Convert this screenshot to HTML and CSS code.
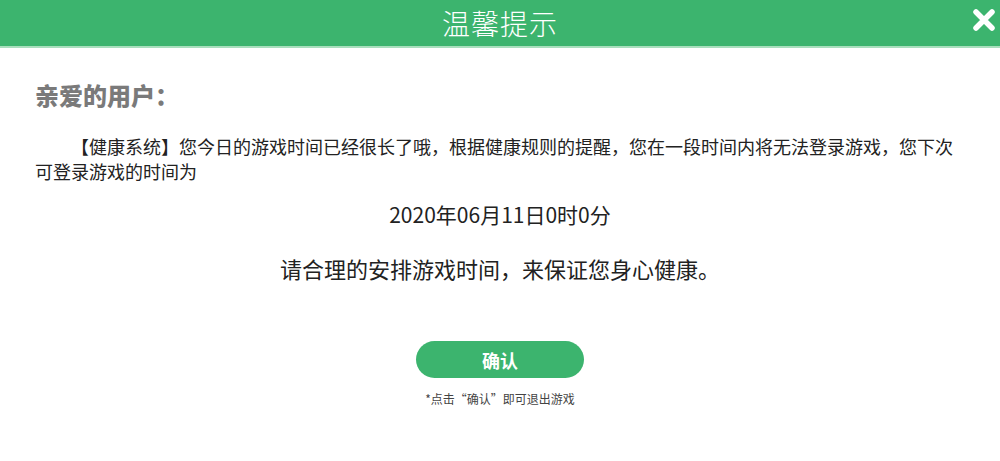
FILE: index.html
```html
<!DOCTYPE html>
<html lang="zh-CN">
<head>
    <meta charset="UTF-8">
    <meta name="viewport" content="width=device-width, initial-scale=1.0">
    <title>温馨提示</title>
    <link rel="stylesheet" href="styles.css">
</head>
<body>
    <div class="dialog">
        <div class="dialog-header">
            <h1>温馨提示</h1>
            <button class="close-btn" aria-label="关闭">
                <svg width="24" height="22" viewBox="0 0 24 22">
                    <path d="M4 3 L20 19 M20 3 L4 19" stroke="#fff" stroke-width="5.5" stroke-linecap="round"/>
                </svg>
            </button>
        </div>

        <div class="dialog-body">
            <h2 class="greeting">亲爱的用户：</h2>
            <p class="notice">【健康系统】您今日的游戏时间已经很长了哦，根据健康规则的提醒，您在一段时间内将无法登录游戏，您下次可登录游戏的时间为</p>
            <p class="unlock-time">2020年06月11日0时0分</p>
            <p class="advice">请合理的安排游戏时间，来保证您身心健康。</p>

            <div class="actions">
                <button class="confirm-btn">确认</button>
                <p class="hint">*点击“确认”即可退出游戏</p>
            </div>
        </div>
    </div>
</body>
</html>
```

FILE: styles.css
```css
:root {
    --green: #3cb46e;
    --green-light: #a9dfbd;
    --text-color: #222;
    --greeting-color: #7a7a7a;
}

* {
    box-sizing: border-box;
    margin: 0;
    padding: 0;
}

body {
    font-family: "Noto Sans CJK SC", "Noto Sans", sans-serif;
    background: #fff;
    color: var(--text-color);
}

.dialog-header {
    position: relative;
    height: 48px;
    background: var(--green);
    border-bottom: 2px solid var(--green-light);
    display: flex;
    justify-content: center;
    align-items: center;
}

.dialog-header h1 {
    font-size: 28px;
    font-weight: 300;
    color: #fff;
    line-height: 46px;
    letter-spacing: 1px;
}

.close-btn {
    position: absolute;
    right: 4px;
    top: 9px;
    background: none;
    border: none;
    cursor: pointer;
    display: flex;
}

.dialog-body {
    padding: 0 35px;
}

.greeting {
    margin-top: 32px;
    font-size: 24px;
    line-height: 30px;
    font-weight: 900;
    color: var(--greeting-color);
}

.notice {
    margin-top: 24px;
    font-size: 18px;
    line-height: 25px;
    text-indent: 2em;
}

.unlock-time {
    margin-top: 15px;
    text-align: center;
    font-size: 21px;
    line-height: 30px;
}

.advice {
    margin-top: 24px;
    text-align: center;
    font-size: 22px;
    line-height: 30px;
}

.actions {
    display: flex;
    flex-direction: column;
    align-items: center;
    margin-top: 58px;
}

.confirm-btn {
    width: 168px;
    height: 37px;
    border: none;
    border-radius: 19px;
    background: var(--green);
    color: #fff;
    font-family: inherit;
    font-size: 18px;
    font-weight: 700;
    cursor: pointer;
}

.hint {
    margin-top: 13px;
    font-size: 12px;
    line-height: 16px;
    color: #444;
}
```
